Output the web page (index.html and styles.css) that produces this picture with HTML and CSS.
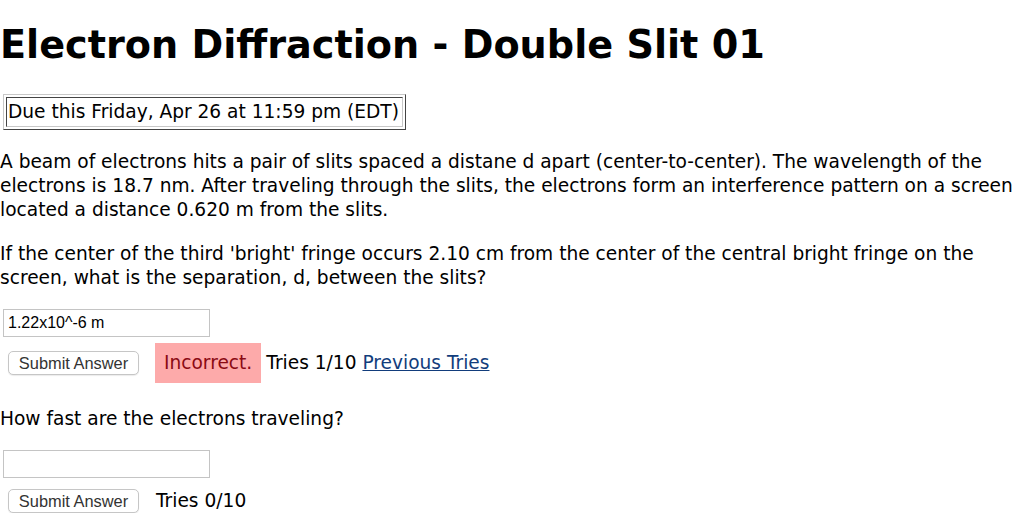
FILE: index.html
```html
<!DOCTYPE html>
<html>

<head>
    <meta http-equiv="Content-Type" content="text/html; charset=utf-8" />
    <title>Electron Diffraction - Double Slit 01</title>
    <link rel="stylesheet" href="styles.css">
</head>

<body>
    <h1 class="title">Electron Diffraction - Double Slit 01</h1>

    <div class="due">
        <div class="due-cell">Due this Friday, Apr 26 at 11:59 pm (EDT)</div>
    </div>

    <p class="text first">A beam of electrons hits a pair of slits spaced a distane d apart (center-to-center). The wavelength of the electrons is 18.7 nm. After traveling through the slits, the electrons form an interference pattern on a screen located a distance 0.620 m from the slits.</p>
    <p class="text">If the center of the third 'bright' fringe occurs 2.10 cm from the center of the central bright fringe on the screen, what is the separation, d, between the slits?</p>

    <div class="part">
        <input class="field" type="text" value="1.22x10^-6 m" />
        <div class="submit-row">
            <button class="submit">Submit Answer</button>
            <span class="incorrect">Incorrect.</span>
            <span class="tries">Tries 1/10 <a href="#">Previous Tries</a></span>
        </div>
    </div>

    <p class="text question">How fast are the electrons traveling?</p>

    <div class="part">
        <input class="field" type="text" value="" />
        <div class="submit-row plain">
            <button class="submit">Submit Answer</button>
            <span class="tries">Tries 0/10</span>
        </div>
    </div>
</body>

</html>
```

FILE: styles.css
```css
body {
    margin: 0;
    font-family: "DejaVu Sans", Verdana, sans-serif;
    font-size: 18.6px;
    line-height: 24px;
    color: #000;
    background: #fff;
}

.title {
    margin: 22px 0 0;
    font-size: 38.2px;
    line-height: 46px;
    font-weight: bold;
}

/* old style table border: outset outside, inset cell */
.due {
    display: inline-block;
    margin: 26px 0 0 3px;
    padding: 2px;
    border: 1px solid;
    border-color: #c8c8c8 #444 #444 #c8c8c8;
}
.due-cell {
    padding: 3px 3px 3px 1px;
    line-height: 22px;
    border: 1px solid;
    border-color: #444 #c8c8c8 #c8c8c8 #444;
}

.text {
    margin: 20px 0 0;
}
.text.first {
    margin-top: 20px;
}
.text.question {
    margin-top: 24px;
}

.part {
    margin-top: 19px;
}

.field {
    display: block;
    box-sizing: border-box;
    width: 207px;
    height: 28px;
    margin: 0 0 0 3px;
    padding: 0 4px;
    border: 1px solid #c4c4c4;
    font-family: "Liberation Sans", Arial, sans-serif;
    font-size: 16px;
    color: #000;
}

.submit-row {
    display: flex;
    align-items: center;
    margin-top: 6px;
}
.submit-row.plain {
    margin-top: 11px;
}

.submit {
    box-sizing: border-box;
    height: 24px;
    width: 131px;
    margin-left: 8px;
    padding: 0;
    background: #fff;
    border: 1px solid #c6c6c6;
    border-radius: 5px;
    box-shadow: 0 1px 1px rgba(0, 0, 0, 0.08);
    font-family: "Liberation Sans", Arial, sans-serif;
    font-size: 16.4px;
    color: #333;
}

.incorrect {
    margin-left: 16px;
    padding: 8px 9px;
    background: #fdaaaa;
    color: #8b0a14;
}

.tries {
    margin-left: 5px;
}
.submit-row.plain .tries {
    margin-left: 17px;
}

.tries a {
    color: #123d7c;
}
```
